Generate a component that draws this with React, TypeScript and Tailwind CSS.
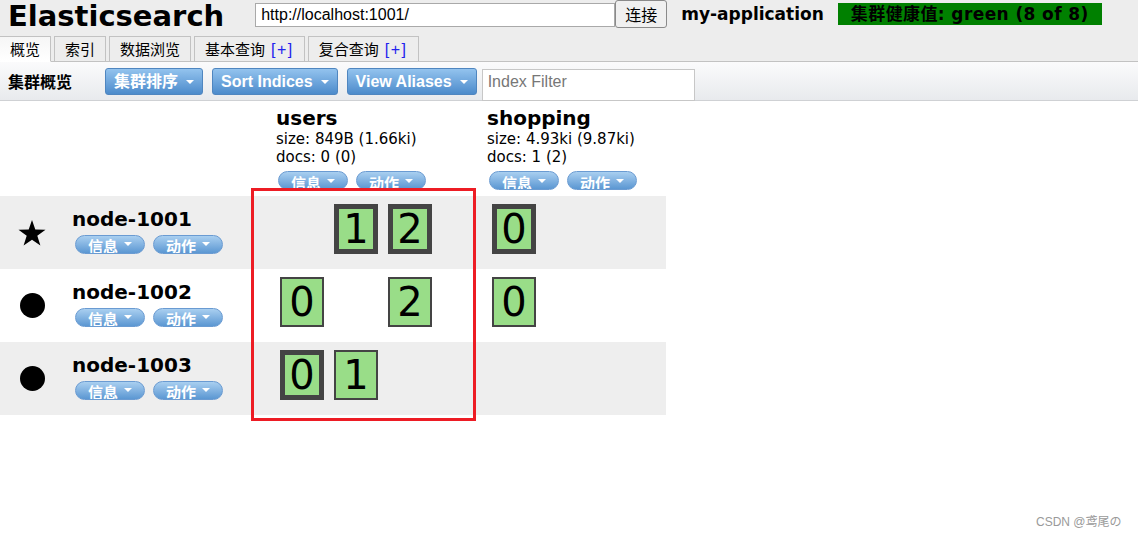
import React from 'react';

const cjk = '"Noto Sans CJK SC", sans-serif';
const verdana = '"DejaVu Sans", "Noto Sans CJK SC", sans-serif';
const arial = '"Liberation Sans", "Noto Sans CJK SC", sans-serif';

function Caret({ size = 8 }: { size?: number }) {
  return (
    <svg width={size} height={size / 2} viewBox="0 0 8 4" className="inline-block shrink-0">
      <path d="M0 0 L8 0 L4 4 Z" fill="#fff" />
    </svg>
  );
}

function ToolButton({ label }: { label: string }) {
  return (
    <button
      className="h-[27px] px-[8px] flex items-center gap-[8px] rounded-[3px] border border-[#4f86c0] bg-gradient-to-b from-[#93c3ee] to-[#4c8bcb] text-white font-bold text-[16px]"
      style={{ fontFamily: arial }}
    >
      {label}
      <Caret />
    </button>
  );
}

function Pill({ label }: { label: string }) {
  return (
    <button
      className="h-[19px] w-[70px] flex items-center justify-center gap-[6px] rounded-full border border-[#6a9bd2] bg-gradient-to-b from-[#a9cff0] to-[#5b97d2] text-white font-bold text-[15px] leading-none overflow-hidden"
      style={{ fontFamily: cjk }}
    >
      <span className="mt-[3px]">{label}</span>
      <Caret />
    </button>
  );
}

function Shard({ n, primary }: { n?: number; primary?: boolean }) {
  if (n === undefined) return <div className="w-[44px] h-[50px]" />;
  return (
    <div
      className={
        'w-[44px] h-[50px] bg-[#99dd88] border-[#444] flex items-center justify-center text-[40px] leading-none text-black ' +
        (primary ? 'border-[5px]' : 'border-2')
      }
      style={{ fontFamily: verdana }}
    >
      {n}
    </div>
  );
}

function Star() {
  return (
    <svg width="28" height="26" viewBox="0 0 28 26">
      <path d="M14 0 L17.3 9.6 L27.5 9.7 L19.3 15.8 L22.4 25.6 L14 19.7 L5.6 25.6 L8.7 15.8 L0.5 9.7 L10.7 9.6 Z" fill="#000" />
    </svg>
  );
}

const nodes = [
  { name: 'node-1001', master: true, shop: true, userN: [undefined, 1, 2] },
  { name: 'node-1002', master: false, shop: true, userN: [0, undefined, 2] },
  { name: 'node-1003', master: false, shop: false, userN: [0, 1, undefined] },
];

// primary flags per row: users shards, shopping
const primaries = [
  { users: [false, true, true], shop: true },
  { users: [false, false, false], shop: false },
  { users: [true, false, false], shop: false },
];

export default function App() {
  const tabs = ['概览', '索引', '数据浏览', '基本查询', '复合查询'];

  return (
    <div className="relative w-[1138px] h-[536px] bg-white overflow-hidden text-black">
      {/* header */}
      <div className="bg-[#ededed] h-[62px] border-b border-[#c2c2c2] relative">
        <div className="flex items-start h-[36px]">
          <div className="ml-[8px] text-[29px] font-bold leading-[32px]" style={{ fontFamily: verdana }}>
            Elasticsearch
          </div>
          <div
            className="ml-[31px] mt-[3px] w-[360px] h-[24px] bg-white border border-[#a9a9a9] pl-[5px] text-[16px] leading-[22px]"
            style={{ fontFamily: arial }}
          >
            http://localhost:1001/
          </div>
          <button
            className="h-[28px] w-[52px] border border-[#8a8a8a] rounded-[3px] bg-[#f0f0f0] text-[16px] leading-none"
            style={{ fontFamily: cjk }}
          >
            连接
          </button>
          <div className="ml-[14px] mt-[3px] text-[17px] font-bold leading-[22px]" style={{ fontFamily: verdana }}>
            my-application
          </div>
          <div
            className="ml-[14px] mt-[3px] w-[264px] h-[22px] bg-[#008000] pl-[13px] text-[17px] font-bold leading-[22px] tracking-[0.4px]"
            style={{ fontFamily: verdana }}
          >
            集群健康值: green (8 of 8)
          </div>
        </div>
        <div className="flex gap-[3px] items-end h-[26px] absolute left-0 bottom-[-1px]">
          {tabs.map((t, i) => (
            <div
              key={t}
              className={
                'h-[26px] px-[10px] border border-[#c2c2c2] text-[15px] leading-[24px] whitespace-nowrap ' +
                (i === 0 ? 'bg-gradient-to-b from-[#f6f6f6] to-white border-b-white border-l-0 w-[51px]' : 'bg-[#ededed] border-b-[#c2c2c2]')
              }
              style={{ fontFamily: cjk }}
            >
              {t}
              {i >= 3 && (
                <span className="inline-block ml-[6px] text-[#2222ee] text-[16px] tracking-[1.5px]" style={{ fontFamily: arial }}>
                  [+]
                </span>
              )}
            </div>
          ))}
        </div>
      </div>

      {/* toolbar */}
      <div className="h-[39px] bg-gradient-to-b from-[#fbfbfc] to-[#e8eaed] border-b border-[#cfd1d4] flex items-start">
        <div className="ml-[8px] mt-[7px] w-[97px] text-[16px] font-bold leading-[24px]" style={{ fontFamily: cjk }}>
          集群概览
        </div>
        <div className="flex gap-[9px] mt-[6px]">
          <ToolButton label="集群排序" />
          <ToolButton label="Sort Indices" />
          <ToolButton label="View Aliases" />
        </div>
        <div
          className="ml-[5px] mt-[7px] w-[213px] h-[32px] bg-white border border-[#c7c7c7] pl-[5px] text-[16px] leading-[24px] text-[#777]"
          style={{ fontFamily: arial }}
        >
          Index Filter
        </div>
      </div>

      {/* cluster table */}
      <div className="w-[666px]">
        <div className="grid grid-cols-[252px_211px_203px] h-[95px]">
          <div />
          {[
            { name: 'users', size: 'size: 849B (1.66ki)', docs: 'docs: 0 (0)' },
            { name: 'shopping', size: 'size: 4.93ki (9.87ki)', docs: 'docs: 1 (2)' },
          ].map((ix) => (
            <div key={ix.name} className="pl-[24px] pt-[5px]" style={{ fontFamily: verdana }}>
              <div className="text-[20px] font-bold leading-[24px]">{ix.name}</div>
              <div className="text-[15px] leading-[18px]">{ix.size}</div>
              <div className="text-[15px] leading-[18px]">{ix.docs}</div>
              <div className="flex gap-[8px] mt-[5px] ml-[2px]">
                <Pill label="信息" />
                <Pill label="动作" />
              </div>
            </div>
          ))}
        </div>

        {nodes.map((node, r) => (
          <div
            key={node.name}
            className={'grid grid-cols-[252px_211px_203px] h-[73px] ' + (r % 2 === 0 ? 'bg-[#eeeeee]' : 'bg-white')}
          >
            <div className="flex items-center">
              <div className="w-[64px] flex justify-center">
                {node.master ? <Star /> : <div className="w-[25px] h-[25px] rounded-full bg-black" />}
              </div>
              <div className="pl-[8px] mt-[-5px]">
                <div className="text-[20px] font-bold leading-[24px]" style={{ fontFamily: verdana }}>
                  {node.name}
                </div>
                <div className="flex gap-[8px] mt-[4px] ml-[3px]">
                  <Pill label="信息" />
                  <Pill label="动作" />
                </div>
              </div>
            </div>
            <div className="flex gap-[10px] pl-[28px] pt-[8px]">
              {node.userN.map((n, i) => (
                <Shard key={i} n={n} primary={primaries[r].users[i]} />
              ))}
            </div>
            <div className="flex pl-[29px] pt-[8px]">
              {node.shop && <Shard n={0} primary={primaries[r].shop} />}
            </div>
          </div>
        ))}
      </div>

      {/* annotation */}
      <div className="absolute left-[251px] top-[188px] w-[225px] h-[233px] border-[3px] border-[#ed1c24]" />

      <div className="absolute left-[1036px] top-[513px] text-[12px] text-[#9a9a9a]" style={{ fontFamily: arial }}>
        CSDN @鸢尾の
      </div>
    </div>
  );
}
